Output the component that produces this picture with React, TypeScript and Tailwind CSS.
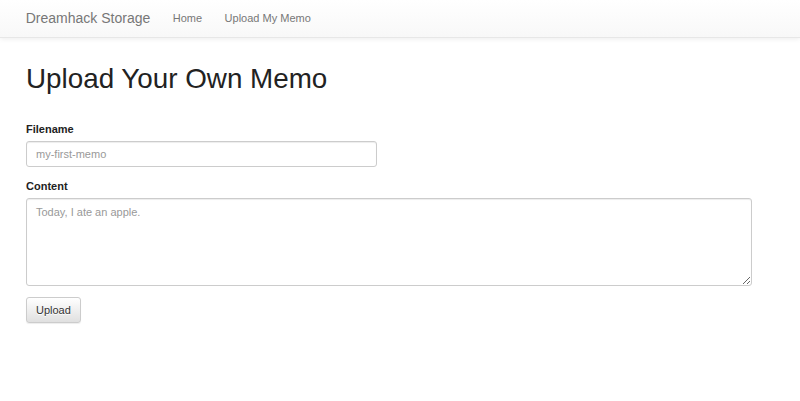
import React from 'react'

const App = () => {
  return (
    <div className="min-h-[401px] bg-white text-[#333] text-[11px] leading-[16px]" style={{ fontFamily: '"Liberation Sans", Arial, Helvetica, sans-serif' }}>
      <nav className="h-[37.5px] border-b border-[#e7e7e7] bg-gradient-to-b from-white to-[#f8f8f8] shadow-[0_1px_5px_rgba(0,0,0,0.075)] flex items-stretch pl-[14.5px]">
        <a href="#" className="flex items-center px-[11.25px] text-[14px] text-[#777] leading-[20px]">Dreamhack Storage</a>
        <ul className="flex">
          <li><a href="#" className="flex items-center h-full px-[11.25px] text-[#777]">Home</a></li>
          <li><a href="#" className="flex items-center h-full px-[11.25px] text-[#777]">Upload My Memo</a></li>
        </ul>
      </nav>

      <div className="pl-[26px]">
        <h1 className="mt-[26px] mb-[27px] text-[27.8px] leading-[30.6px] font-normal text-[#222]">Upload Your Own Memo</h1>
        <form onSubmit={(e) => e.preventDefault()}>
          <div className="mb-[11px]">
            <label className="block font-bold mb-[4px] text-[#222]">Filename</label>
            <input
              type="text"
              placeholder="my-first-memo"
              className="block w-[351px] h-[26px] px-[9px] py-[4.5px] border border-[#ccc] rounded-[3px] shadow-[inset_0_1px_1px_rgba(0,0,0,0.075)] text-[11px] text-[#555] placeholder:text-[#999] outline-none"
            />
          </div>
          <div className="mb-[11px]">
            <label className="block font-bold mb-[4px] text-[#222]">Content</label>
            <textarea
              placeholder="Today, I ate an apple."
              className="block w-[726px] h-[88px] px-[9px] py-[4.5px] border border-[#ccc] rounded-[3px] shadow-[inset_0_1px_1px_rgba(0,0,0,0.075)] text-[11px] leading-[16px] text-[#555] placeholder:text-[#999] outline-none"
            />
          </div>
          <button
            type="submit"
            className="h-[26px] px-[9px] border border-[#ccc] rounded-[3px] bg-gradient-to-b from-white to-[#e0e0e0] shadow-[0_1px_1px_rgba(0,0,0,0.075)] text-[11px] text-[#333] [text-shadow:0_1px_0_#fff]"
          >
            Upload
          </button>
        </form>
      </div>
    </div>
  )
}

export default App
